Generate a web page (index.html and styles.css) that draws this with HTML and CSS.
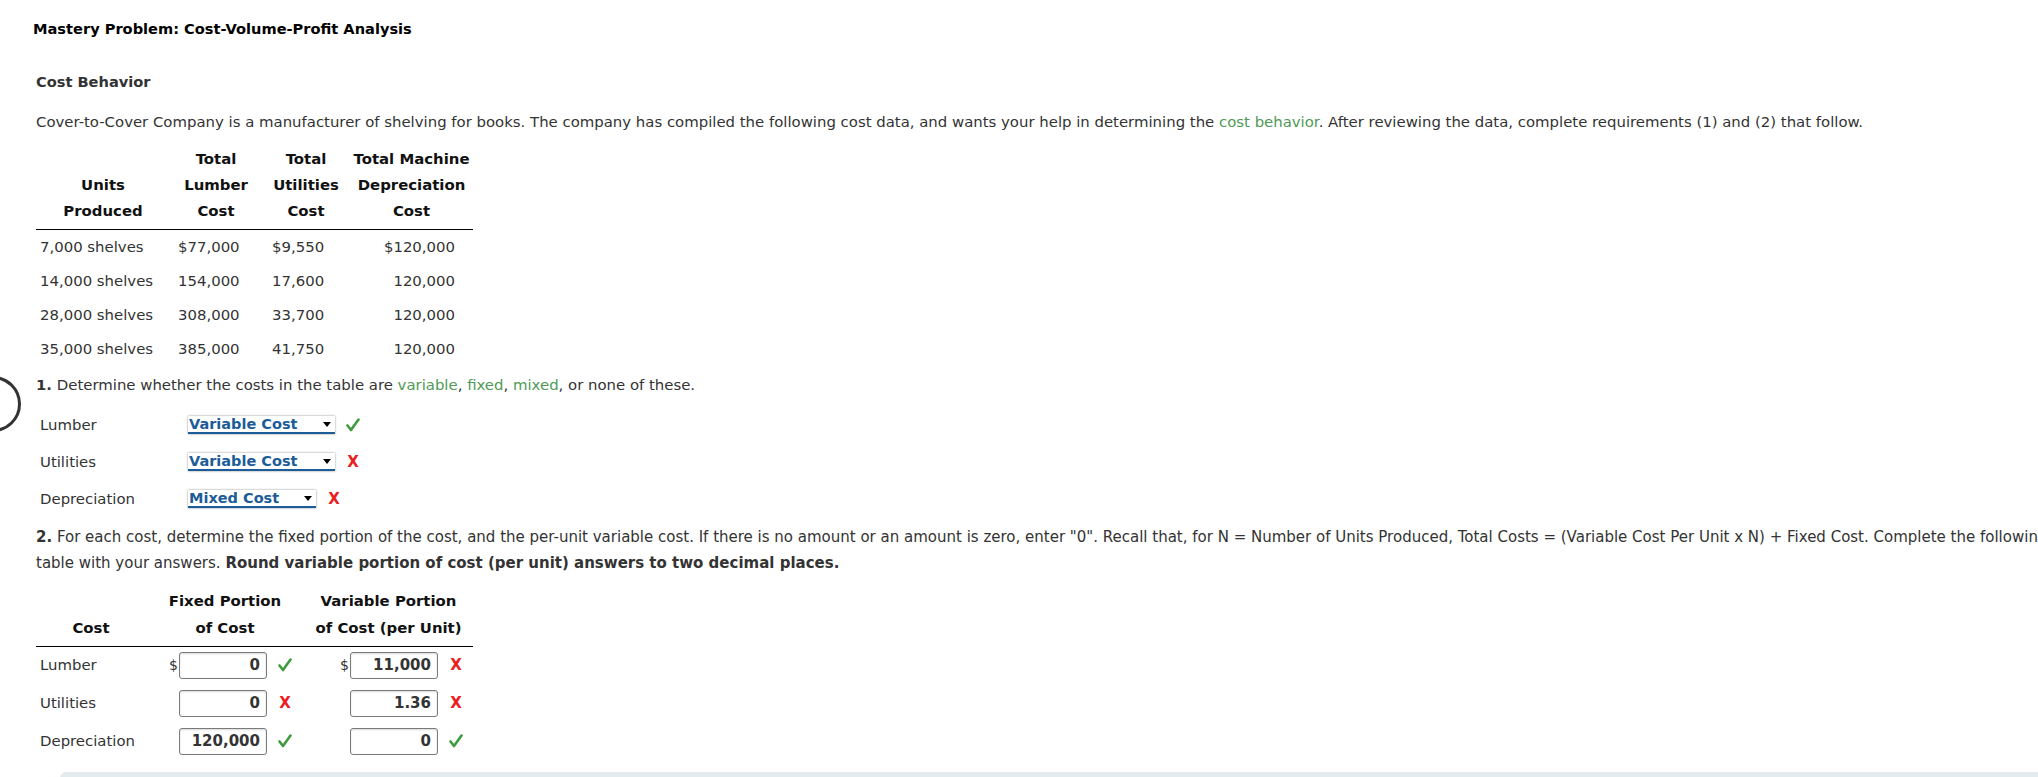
FILE: index.html
```html
<!DOCTYPE html>
<html>
<head>
<meta charset="utf-8">
<title>Mastery Problem: Cost-Volume-Profit Analysis</title>
<link rel="stylesheet" href="styles.css">
</head>
<body>
<div class="page">
  <span class="ring"></span>
  <h1 class="title">Mastery Problem: Cost-Volume-Profit Analysis</h1>
  <div class="content">
    <h2 class="sub">Cost Behavior</h2>
    <p class="intro">Cover-to-Cover Company is a manufacturer of shelving for books. The company has compiled the following cost data, and wants your help in determining the <span class="term">cost behavior</span>. After reviewing the data, complete requirements (1) and (2) that follow.</p>

    <table class="data">
      <thead>
        <tr>
          <th class="d1">Units<br>Produced</th>
          <th class="d2">Total<br>Lumber<br>Cost</th>
          <th class="d3">Total<br>Utilities<br>Cost</th>
          <th class="d4">Total Machine<br>Depreciation<br>Cost</th>
        </tr>
      </thead>
      <tbody>
        <tr><td class="d1">7,000 shelves</td><td class="d2">$77,000</td><td class="d3">$9,550</td><td class="d4">$120,000</td></tr>
        <tr><td class="d1">14,000 shelves</td><td class="d2">154,000</td><td class="d3">17,600</td><td class="d4">120,000</td></tr>
        <tr><td class="d1">28,000 shelves</td><td class="d2">308,000</td><td class="d3">33,700</td><td class="d4">120,000</td></tr>
        <tr><td class="d1">35,000 shelves</td><td class="d2">385,000</td><td class="d3">41,750</td><td class="d4">120,000</td></tr>
      </tbody>
    </table>

    <p class="q1"><b class="num">1.</b> Determine whether the costs in the table are <span class="term">variable</span>, <span class="term">fixed</span>, <span class="term">mixed</span>, or none of these.</p>

    <div class="sel-row">
      <span class="sel-label">Lumber</span>
      <span class="select wide">Variable Cost<span class="arrow"></span></span>
      <span class="mark ok"><svg viewBox="0 0 14 14" width="14" height="14"><path d="M1.5 7.5 L5 12 L12.5 1.5" fill="none" stroke="#3f9b3f" stroke-width="2.6" stroke-linecap="round" stroke-linejoin="round"/></svg></span>
    </div>
    <div class="sel-row">
      <span class="sel-label">Utilities</span>
      <span class="select wide">Variable Cost<span class="arrow"></span></span>
      <span class="mark bad">X</span>
    </div>
    <div class="sel-row">
      <span class="sel-label">Depreciation</span>
      <span class="select narrow">Mixed Cost<span class="arrow"></span></span>
      <span class="mark bad">X</span>
    </div>

    <p class="q2"><b class="num">2.</b> For each cost, determine the fixed portion of the cost, and the per-unit variable cost. If there is no amount or an amount is zero, enter "0". Recall that, for N = Number of Units Produced, Total Costs = (Variable Cost Per Unit x N) + Fixed Cost. Complete the following<br>table with your answers. <b>Round variable portion of cost (per unit) answers to two decimal places.</b></p>

    <table class="answers">
      <thead>
        <tr>
          <th class="a1">Cost</th>
          <th class="a2">Fixed Portion<br>of Cost</th>
          <th class="a3">Variable Portion<br>of Cost (per Unit)</th>
        </tr>
      </thead>
      <tbody>
        <tr>
          <td class="a1">Lumber</td>
          <td class="a2"><div class="cell"><span class="cur">$</span><span class="box">0</span><span class="mark ok"><svg viewBox="0 0 14 14" width="14" height="14"><path d="M1.5 7.5 L5 12 L12.5 1.5" fill="none" stroke="#3f9b3f" stroke-width="2.6" stroke-linecap="round" stroke-linejoin="round"/></svg></span></div></td>
          <td class="a3"><div class="cell"><span class="cur">$</span><span class="box">11,000</span><span class="mark bad">X</span></div></td>
        </tr>
        <tr>
          <td class="a1">Utilities</td>
          <td class="a2"><div class="cell"><span class="cur"></span><span class="box">0</span><span class="mark bad">X</span></div></td>
          <td class="a3"><div class="cell"><span class="cur"></span><span class="box">1.36</span><span class="mark bad">X</span></div></td>
        </tr>
        <tr>
          <td class="a1">Depreciation</td>
          <td class="a2"><div class="cell"><span class="cur"></span><span class="box">120,000</span><span class="mark ok"><svg viewBox="0 0 14 14" width="14" height="14"><path d="M1.5 7.5 L5 12 L12.5 1.5" fill="none" stroke="#3f9b3f" stroke-width="2.6" stroke-linecap="round" stroke-linejoin="round"/></svg></span></div></td>
          <td class="a3"><div class="cell"><span class="cur"></span><span class="box">0</span><span class="mark ok"><svg viewBox="0 0 14 14" width="14" height="14"><path d="M1.5 7.5 L5 12 L12.5 1.5" fill="none" stroke="#3f9b3f" stroke-width="2.6" stroke-linecap="round" stroke-linejoin="round"/></svg></span></div></td>
        </tr>
      </tbody>
    </table>

    <div class="footer-bar"></div>
  </div>
</div>
</body>
</html>
```

FILE: styles.css
```css
html, body {
  margin: 0;
  padding: 0;
  background: #fff;
  overflow: hidden;
}

body {
  font-family: "DejaVu Sans", Verdana, sans-serif;
  font-size: 14.9px;
  color: #333;
}

.page {
  position: relative;
  min-height: 777px;
}

.ring {
  position: absolute;
  left: -35px;
  top: 357px;
  width: 50px;
  height: 50px;
  border: 3px solid #333;
  border-radius: 50%;
}

.title {
  margin: 19px 0 0 33px;
  font-size: 14.6px;
  line-height: 20px;
  font-weight: bold;
  color: #000;
}

.content {
  padding-left: 36px;
}

.sub {
  margin: 33px 0 0 0;
  font-size: 14.6px;
  line-height: 20px;
  font-weight: bold;
  color: #333;
}

.intro {
  margin: 20px 0 0 0;
  line-height: 20px;
  white-space: nowrap;
}

.term {
  color: #4f9a55;
}

/* data table */
.data {
  margin-top: 14px;
  border-collapse: collapse;
  table-layout: fixed;
  width: 437px;
}

.data th,
.data td {
  box-sizing: border-box;
}

.data th {
  font-weight: bold;
  color: #111;
  line-height: 26px;
  padding: 0 0 5px 0;
  text-align: center;
  vertical-align: bottom;
  border-bottom: 1px solid #000;
  white-space: nowrap;
}

.data td {
  height: 34px;
  padding: 1px 0 0 0;
  vertical-align: middle;
  white-space: nowrap;
}

.data .d1 { width: 134px; }
.data .d2 { width: 92px; }
.data .d3 { width: 88px; }
.data .d4 { width: 123px; }

.data td.d1 { padding-left: 4px; }
.data td.d2 { padding-left: 8px; }
.data td.d3 { padding-left: 10px; }
.data td.d4 { text-align: right; padding-right: 18px; }

.q1 {
  margin: 9px 0 0 0;
  line-height: 20px;
}

.num {
  color: #333;
}

.sel-row {
  display: flex;
  align-items: center;
  height: 37px;
}

.sel-row:first-of-type {
  margin-top: 12px;
}

.sel-label {
  width: 152px;
  padding-left: 4px;
  box-sizing: border-box;
  color: #333;
}

.select {
  position: relative;
  display: inline-flex;
  align-items: center;
  height: 18px;
  padding-left: 1px;
  box-sizing: border-box;
  background: #fff;
  color: #1c5c98;
  font-weight: bold;
  font-size: 14.5px;
  border-bottom: 2px solid #1c5c98;
  box-shadow: 0 0 2px rgba(0, 0, 0, 0.45);
}

.select.wide { width: 147px; }
.select.narrow { width: 128px; }

.arrow {
  position: absolute;
  right: 4px;
  top: 6px;
  width: 0;
  height: 0;
  border-left: 4px solid transparent;
  border-right: 4px solid transparent;
  border-top: 5px solid #000;
}

.mark {
  display: inline-flex;
  align-items: center;
  justify-content: center;
  width: 14px;
  margin-left: 11px;
}

.mark.bad {
  color: #ee1c1c;
  font-weight: bold;
  font-size: 15px;
  font-family: "DejaVu Sans", Verdana, sans-serif;
}

.q2 {
  margin: 6px 0 0 0;
  font-size: 15px;
  line-height: 26px;
  white-space: nowrap;
}

.q2 b {
  color: #333;
}

/* answers table */
.answers {
  margin-top: 12px;
  border-collapse: collapse;
  table-layout: fixed;
  width: 437px;
}

.answers th,
.answers td {
  box-sizing: border-box;
}

.answers th {
  font-weight: bold;
  color: #111;
  line-height: 27px;
  padding: 0 0 4px 0;
  text-align: center;
  vertical-align: bottom;
  border-bottom: 1px solid #000;
  white-space: nowrap;
}

.answers td {
  height: 38px;
  padding: 0;
  vertical-align: middle;
}

.answers .a1 { width: 110px; }
.answers .a2 { width: 158px; }
.answers .a3 { width: 169px; }

.answers td.a1 { padding-left: 4px; }
.answers td.a2 { padding-left: 23px; }
.answers td.a3 { padding-left: 36px; }

.cell {
  display: flex;
  align-items: center;
}

.cur {
  width: 10px;
  color: #333;
  font-size: 14px;
}

.box {
  display: inline-block;
  width: 88px;
  height: 27px;
  line-height: 25px;
  box-sizing: border-box;
  border: 1px solid #7a7a7a;
  border-radius: 3px;
  box-shadow: inset 0 1px 2px rgba(0, 0, 0, 0.15);
  text-align: right;
  padding-right: 6px;
  font-weight: bold;
  font-size: 15px;
  color: #333;
  background: #fff;
}

.footer-bar {
  margin: 12px 0 0 24px;
  height: 30px;
  background: #e4ebef;
  border-top-left-radius: 6px;
}
```
